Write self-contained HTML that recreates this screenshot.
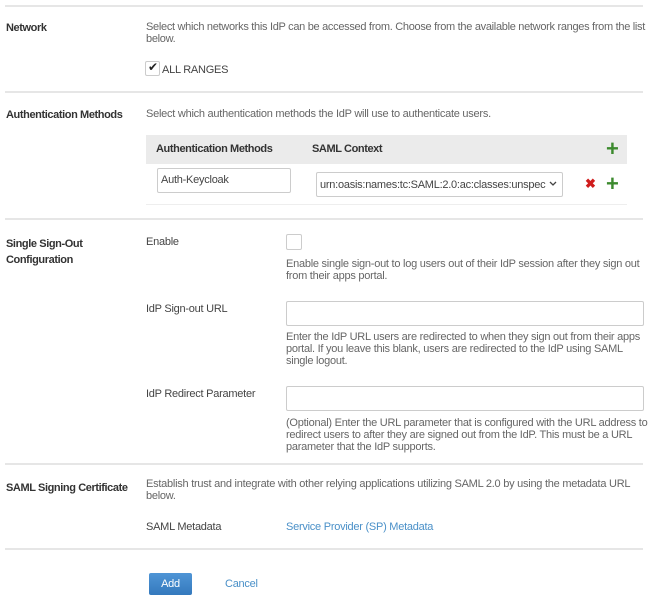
<!DOCTYPE html>
<html><head><style>
body{margin:0;width:660px;height:601px;background:#fff;font-family:"Liberation Sans",sans-serif;font-size:11px;color:#555;position:relative;overflow:hidden;letter-spacing:-0.25px}
.a{position:absolute;white-space:nowrap}
.hr{position:absolute;left:5px;width:638px;height:2px;background:#e6e6e6}
.b{color:#333;font-weight:bold;font-size:11px;letter-spacing:-0.4px}
.d{color:#666;line-height:12px;white-space:normal}
.l{color:#444}
.in{position:absolute;border:1px solid #ccc;border-radius:2px;background:#fff}
</style></head><body>
<div class="hr" style="top:5px"></div>
<div class="a b" style="left:6px;top:22px">Network</div>
<div class="a d" style="left:146px;top:21px;width:505px;letter-spacing:-0.3px">Select which networks this IdP can be accessed from. Choose from the available network ranges from the list below.</div>
<div class="in" style="left:145px;top:61px;width:13px;height:13px"></div>
<div class="a" style="left:148px;top:60px;font-size:12px;color:#222">✔</div>
<div class="a" style="left:162px;top:64px;color:#444">ALL RANGES</div>
<div class="hr" style="top:91px"></div>
<div class="a b" style="left:6px;top:109px">Authentication Methods</div>
<div class="a d" style="left:146px;top:108px">Select which authentication methods the IdP will use to authenticate users.</div>
<div class="a" style="left:146px;top:135px;width:481px;height:29px;background:#ebebeb"></div>
<div class="a b" style="left:156px;top:143px">Authentication Methods</div>
<div class="a b" style="left:312px;top:143px">SAML Context</div>
<div class="a" style="left:606px;top:136px;font-size:22px;color:#3c8a2e;font-weight:bold">+</div>
<div class="in" style="left:157px;top:168px;width:132px;height:23px"></div>
<div class="a" style="left:161px;top:174px;color:#444">Auth-Keycloak</div>
<div class="in" style="left:316px;top:172px;width:245px;height:23px"></div>
<div class="a" style="left:320px;top:179px;color:#444;width:226px;overflow:hidden">urn:oasis:names:tc:SAML:2.0:ac:classes:unspecified</div>
<svg class="a" style="left:549px;top:181px" width="8" height="6"><path d="M1 1l3 3 3-3" fill="none" stroke="#444" stroke-width="1.3"/></svg>
<div class="a" style="left:585px;top:176px;font-size:13px;color:#d01c1c;font-weight:bold">✖</div>
<div class="a" style="left:606px;top:171px;font-size:22px;color:#3c8a2e;font-weight:bold">+</div>
<div class="a" style="left:146px;top:204px;width:481px;height:1px;background:#eee"></div>
<div class="hr" style="top:218px"></div>
<div class="a b" style="left:6px;top:236px;line-height:16px">Single Sign-Out<br>Configuration</div>
<div class="a l" style="left:146px;top:236px">Enable</div>
<div class="in" style="left:286px;top:234px;width:14px;height:14px"></div>
<div class="a d" style="left:286px;top:258px;width:362px">Enable single sign-out to log users out of their IdP session after they sign out from their apps portal.</div>
<div class="a l" style="left:146px;top:303px">IdP Sign-out URL</div>
<div class="in" style="left:286px;top:301px;width:356px;height:23px"></div>
<div class="a d" style="left:286px;top:331px;width:362px">Enter the IdP URL users are redirected to when they sign out from their apps portal. If you leave this blank, users are redirected to the IdP using SAML single logout.</div>
<div class="a l" style="left:146px;top:388px">IdP Redirect Parameter</div>
<div class="in" style="left:286px;top:386px;width:356px;height:23px"></div>
<div class="a d" style="left:286px;top:417px;width:362px">(Optional) Enter the URL parameter that is configured with the URL address to redirect users to after they are signed out from the IdP. This must be a URL parameter that the IdP supports.</div>
<div class="hr" style="top:463px"></div>
<div class="a b" style="left:6px;top:482px">SAML Signing Certificate</div>
<div class="a d" style="left:146px;top:478px;width:500px">Establish trust and integrate with other relying applications utilizing SAML 2.0 by using the metadata URL below.</div>
<div class="a l" style="left:146px;top:521px">SAML Metadata</div>
<div class="a" style="left:286px;top:521px;color:#4a90c8">Service Provider (SP) Metadata</div>
<div class="hr" style="top:548px"></div>
<div class="a" style="left:149px;top:573px;width:43px;height:22px;background:linear-gradient(#4f95d6,#3479bd);border-radius:2px;color:#fff;text-align:center;line-height:22px">Add</div>
<div class="a" style="left:225px;top:578px;color:#4a90c8">Cancel</div>
</body></html>
